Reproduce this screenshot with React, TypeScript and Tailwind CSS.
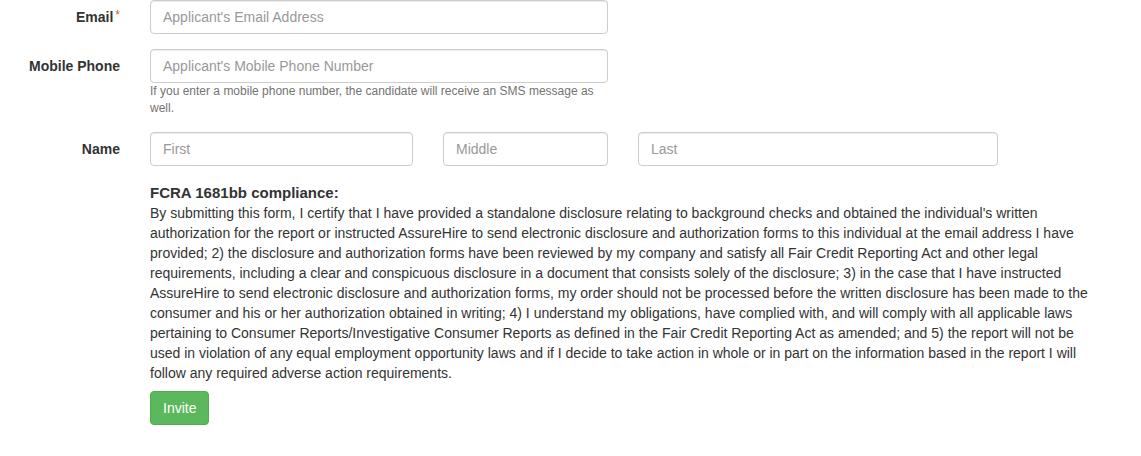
import { type ReactNode } from 'react';

const font = { fontFamily: '"Liberation Sans", Arial, Helvetica, sans-serif' };

function Field({ label, required, children }: { label: string; required?: boolean; children: ReactNode }) {
  return (
    <div className="flex items-start">
      <label className="w-[120px] shrink-0 pt-[7px] text-right text-[14px] leading-[20px] font-bold text-[#333]">
        {label}
        {required && <span className="ml-[2px] align-top text-[12px] leading-[16px] font-normal text-[#d9534f]">*</span>}
      </label>
      <div className="ml-[30px]">{children}</div>
    </div>
  );
}

function TextInput({ placeholder, width }: { placeholder: string; width: string }) {
  return (
    <input
      type="text"
      placeholder={placeholder}
      className={`${width} h-[34px] rounded-[4px] border border-[#ccc] bg-white px-[12px] text-[14px] text-[#555] shadow-[inset_0_1px_1px_rgba(0,0,0,0.075)] outline-none placeholder:text-[#999]`}
    />
  );
}

export default function App() {
  return (
    <div className="min-h-screen bg-white text-[#333]" style={font}>
      <div className="flex flex-col">
        <Field label="Email" required>
          <TextInput placeholder="Applicant's Email Address" width="w-[458px]" />
        </Field>

        <div className="mt-[15px]">
          <Field label="Mobile Phone">
            <TextInput placeholder="Applicant's Mobile Phone Number" width="w-[458px]" />
            <p className="w-[458px] text-[12px] leading-[17px] text-[#737373]">
              If you enter a mobile phone number, the candidate will receive an SMS message as well.
            </p>
          </Field>
        </div>

        <div className="mt-[15px]">
          <Field label="Name">
            <div className="flex gap-[30px]">
              <TextInput placeholder="First" width="w-[263px]" />
              <TextInput placeholder="Middle" width="w-[165px]" />
              <TextInput placeholder="Last" width="w-[360px]" />
            </div>
          </Field>
        </div>

        <div className="mt-[17px] ml-[150px] w-[945px]">
          <h4 className="text-[15px] leading-[20px] font-bold">FCRA 1681bb compliance:</h4>
          <p className="text-[14px] leading-[20px]">
            By submitting this form, I certify that I have provided a standalone disclosure relating to background checks and
            obtained the individual's written authorization for the report or instructed AssureHire to send electronic
            disclosure and authorization forms to this individual at the email address I have provided; 2) the disclosure and
            authorization forms have been reviewed by my company and satisfy all Fair Credit Reporting Act and other legal
            requirements, including a clear and conspicuous disclosure in a document that consists solely of the disclosure; 3)
            in the case that I have instructed AssureHire to send electronic disclosure and authorization forms, my order should
            not be processed before the written disclosure has been made to the consumer and his or her authorization obtained
            in writing; 4) I understand my obligations, have complied with, and will comply with all applicable laws pertaining
            to Consumer Reports/Investigative Consumer Reports as defined in the Fair Credit Reporting Act as amended; and 5)
            the report will not be used in violation of any equal employment opportunity laws and if I decide to take action in
            whole or in part on the information based in the report I will follow any required adverse action requirements.
          </p>
          <button
            type="button"
            className="mt-[8px] h-[34px] rounded-[4px] border border-[#4cae4c] bg-[#5cb85c] px-[12px] text-[14px] leading-[20px] text-white"
          >
            Invite
          </button>
        </div>
      </div>
    </div>
  );
}
